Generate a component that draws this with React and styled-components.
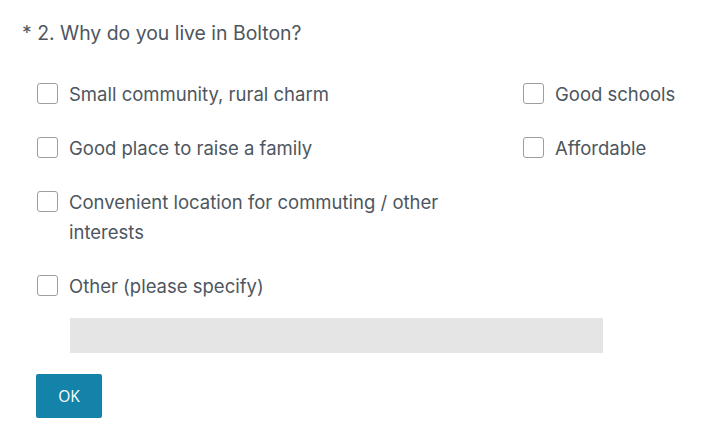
import React from "react";
import styled, { createGlobalStyle } from "styled-components";

const Global = createGlobalStyle`
  html, body { margin: 0; padding: 0; background: #ffffff; }
  body { font-family: "Inter", "Noto Sans", sans-serif; color: #4d565e; }
`;

const Page = styled.div`
  padding: 18px 0 0 22px;
`;

const Title = styled.div`
  font-size: 19.4px;
  line-height: 30px;
  color: #4d565e;
  margin-bottom: 31px;
`;

const Columns = styled.div`
  display: grid;
  grid-template-columns: 486px 160px;
  padding-left: 15px;
`;

const Column = styled.div`
  display: flex;
  flex-direction: column;
  gap: 24px;
`;

const Option = styled.label`
  display: flex;
  align-items: flex-start;
  gap: 11px;
  max-width: ${(p) => p.$max || "none"};
`;

const Box = styled.span`
  flex: none;
  box-sizing: border-box;
  width: 21px;
  height: 21px;
  margin-top: 4px;
  border: 1.5px solid #9b9ea2;
  border-radius: 3px;
  background: #fff;
`;

const Label = styled.span`
  font-size: 18.5px;
  line-height: 30px;
  color: #4d565e;
`;

const Input = styled.div`
  margin: 17px 0 0 48px;
  width: 533px;
  height: 35px;
  background: #e5e5e5;
`;

const Button = styled.button`
  margin: 21px 0 0 14px;
  width: 66px;
  height: 44px;
  border: none;
  border-radius: 2px;
  background: #1383aa;
  color: #fff;
  font-family: "Open Sans", sans-serif;
  font-size: 15.5px;
  padding: 0;
`;

export default function App() {
  return (
    <>
      <Global />
      <Page>
        <Title>* 2. Why do you live in Bolton?</Title>
        <Columns>
          <Column>
            <Option><Box /><Label>Small community, rural charm</Label></Option>
            <Option><Box /><Label>Good place to raise a family</Label></Option>
            <Option $max="410px"><Box /><Label>Convenient location for commuting / other interests</Label></Option>
            <Option><Box /><Label>Other (please specify)</Label></Option>
          </Column>
          <Column>
            <Option><Box /><Label>Good schools</Label></Option>
            <Option><Box /><Label>Affordable</Label></Option>
          </Column>
        </Columns>
        <Input />
        <Button>OK</Button>
      </Page>
    </>
  );
}
